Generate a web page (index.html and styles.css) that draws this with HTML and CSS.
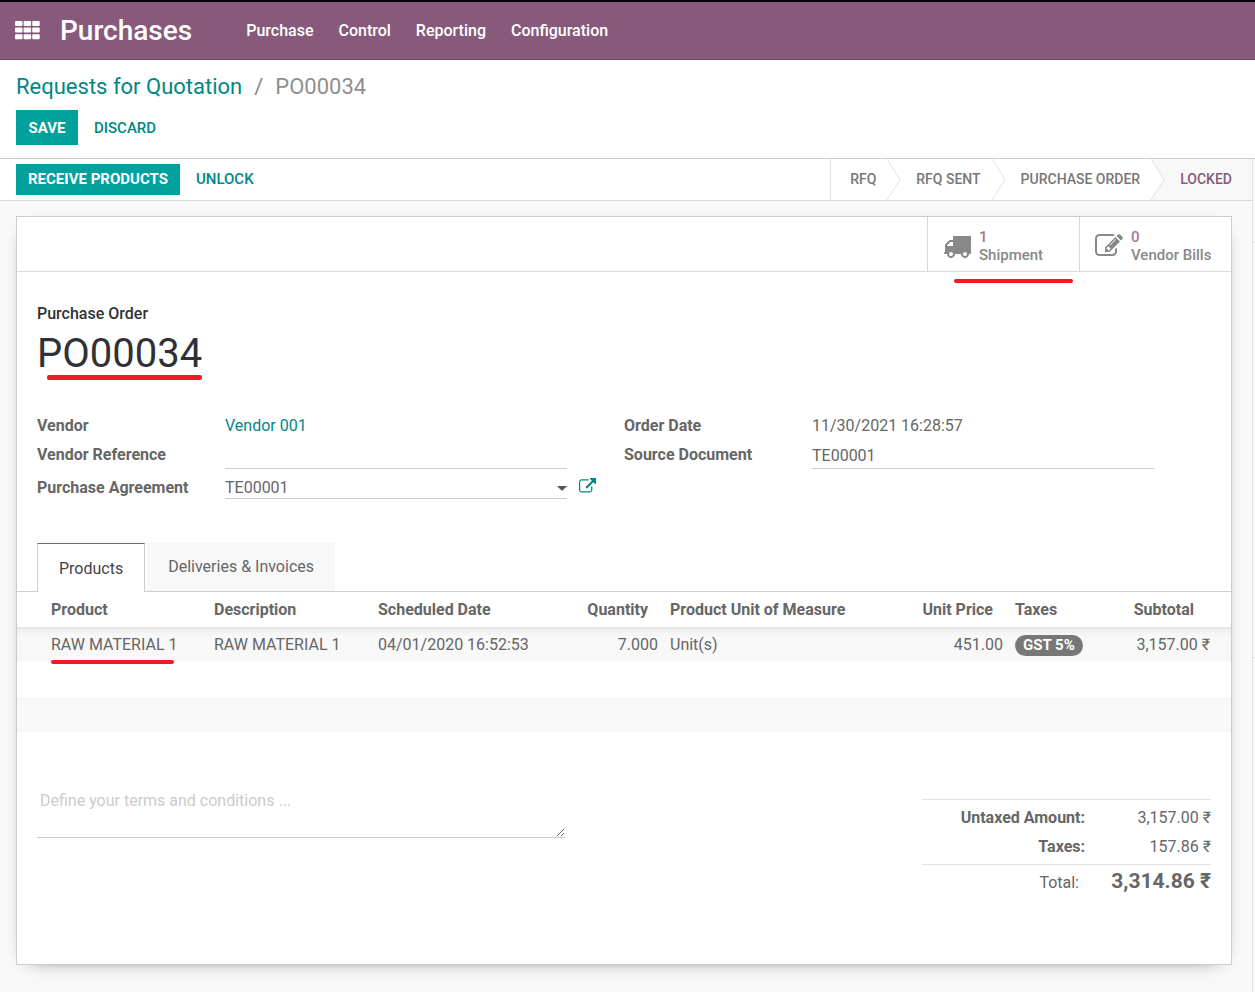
FILE: index.html
```html
<!DOCTYPE html>
<html lang="en">

<head>
    <meta charset="utf-8">
    <title>PO00034 - Purchases</title>
    <link rel="stylesheet" href="styles.css">
</head>

<body>
    <header class="navbar">
        <button class="apps" type="button" aria-label="Applications">
            <svg width="25" height="19" viewBox="0 0 25 19" fill="#fff">
                <rect x="0" y="0" width="7.5" height="5" rx="1" />
                <rect x="8.6" y="0" width="7.5" height="5" rx="1" />
                <rect x="17.2" y="0" width="7.5" height="5" rx="1" />
                <rect x="0" y="6.6" width="7.5" height="5" rx="1" />
                <rect x="8.6" y="6.6" width="7.5" height="5" rx="1" />
                <rect x="17.2" y="6.6" width="7.5" height="5" rx="1" />
                <rect x="0" y="13.2" width="7.5" height="5" rx="1" />
                <rect x="8.6" y="13.2" width="7.5" height="5" rx="1" />
                <rect x="17.2" y="13.2" width="7.5" height="5" rx="1" />
            </svg>
        </button>
        <a class="brand" href="#">Purchases</a>
        <nav class="menu">
            <a href="#">Purchase</a>
            <a href="#">Control</a>
            <a href="#">Reporting</a>
            <a href="#">Configuration</a>
        </nav>
    </header>

    <div class="control-panel">
        <div class="breadcrumb">
            <a href="#">Requests for Quotation</a>
            <span class="slash">/</span>
            <span class="current">PO00034</span>
        </div>
        <div class="buttons">
            <button class="btn primary" type="button">SAVE</button>
            <button class="btn" type="button">DISCARD</button>
        </div>
    </div>

    <div class="content">
        <main class="form-view">
            <div class="statusbar">
                <div class="buttons">
                    <button class="btn primary small" type="button">RECEIVE PRODUCTS</button>
                    <button class="btn small" type="button">UNLOCK</button>
                </div>
                <div class="steps">
                    <span class="step first">RFQ</span>
                    <svg class="arrow" viewBox="0 0 14 41"><path d="M0 0L13 20.5L0 41" /></svg>
                    <span class="step">RFQ SENT</span>
                    <svg class="arrow" viewBox="0 0 14 41"><path d="M0 0L13 20.5L0 41" /></svg>
                    <span class="step">PURCHASE ORDER</span>
                    <svg class="arrow last" viewBox="0 0 14 41"><path d="M0 0L13 20.5L0 41" /></svg>
                    <span class="step active">LOCKED</span>
                </div>
            </div>

            <div class="sheet">
                <div class="button-box">
                    <button class="stat marked" type="button">
                        <svg width="28" height="28" viewBox="0 0 1792 1792"><path d="M640 1408q0-52-38-90t-90-38-90 38-38 90 38 90 90 38 90-38 38-90zm-384-512h384v-256h-158q-13 0-22 9l-195 195q-9 9-9 22v30zm1280 512q0-52-38-90t-90-38-90 38-38 90 38 90 90 38 90-38 38-90zm256-1088v1024q0 15-4 26.5t-13.5 18.5-16.5 11.5-23.5 6-22.5 2-25.5 0-22.5-.5q0 106-75 181t-181 75-181-75-75-181h-384q0 106-75 181t-181 75-181-75-75-181h-64q-3 0-22.5.5t-25.5 0-22.5-2-23.5-6-16.5-11.5-13.5-18.5-4-26.5q0-26 19-45t45-19v-320q0-8-.5-35t0-38 2.5-34.5 6.5-37 14-30.5 22.5-30l198-198q19-19 50.5-32t58.5-13h160v-192q0-26 19-45t45-19h1024q26 0 45 19t19 45z" /></svg>
                        <span class="stat-info"><span class="stat-value">1</span>Shipment</span>
                    </button>
                    <button class="stat" type="button">
                        <svg width="28" height="28" viewBox="0 0 1792 1792"><path d="M888 1184l116-116-152-152-116 116v56h96v96h56zm440-720q-16-16-33 1l-350 350q-17 17-1 33t33-1l350-350q17-17 1-33zm80 594v190q0 119-84.5 203.5t-203.5 84.5h-832q-119 0-203.5-84.5t-84.5-203.5v-832q0-119 84.5-203.5t203.5-84.5h832q63 0 117 25 15 7 18 23 3 17-9 29l-49 49q-14 14-32 8-23-6-45-6h-832q-66 0-113 47t-47 113v832q0 66 47 113t113 47h832q66 0 113-47t47-113v-126q0-13 9-22l64-64q15-15 35-7t20 29zm-96-738l288 288-672 672h-288v-288zm444 132l-92 92-288-288 92-92q28-28 68-28t68 28l152 152q28 28 28 68t-28 68z" /></svg>
                        <span class="stat-info"><span class="stat-value">0</span>Vendor Bills</span>
                    </button>
                </div>

                <div class="title">
                    <div class="title-label">Purchase Order</div>
                    <h1 class="marked">PO00034</h1>
                </div>

                <div class="groups">
                    <div class="group">
                        <div class="field">
                            <span class="label">Vendor</span>
                            <a class="value" href="#">Vendor 001</a>
                        </div>
                        <div class="field tall">
                            <label class="label" for="vendor_ref">Vendor Reference</label>
                            <input class="value" id="vendor_ref" type="text">
                        </div>
                        <div class="field">
                            <label class="label" for="agreement">Purchase Agreement</label>
                            <select class="value" id="agreement">
                                <option>TE00001</option>
                            </select>
                            <a class="external" href="#" aria-label="External link">
                                <svg width="17" height="17" viewBox="0 0 1792 1792"><path d="M1408 928v320q0 119-84.5 203.5t-203.5 84.5h-832q-119 0-203.5-84.5t-84.5-203.5v-832q0-119 84.5-203.5t203.5-84.5h704q14 0 23 9t9 23v64q0 14-9 23t-23 9h-704q-66 0-113 47t-47 113v832q0 66 47 113t113 47h832q66 0 113-47t47-113v-320q0-14 9-23t23-9h64q14 0 23 9t9 23zm384-864v512q0 26-19 45t-45 19-45-19l-176-176-652 652q-10 10-23 10t-23-10l-114-114q-10-10-10-23t10-23l652-652-176-176q-19-19-19-45t19-45 45-19h512q26 0 45 19t19 45z" /></svg>
                            </a>
                        </div>
                    </div>
                    <div class="group">
                        <div class="field">
                            <span class="label">Order Date</span>
                            <span class="value">11/30/2021 16:28:57</span>
                        </div>
                        <div class="field tall">
                            <label class="label" for="source_doc">Source Document</label>
                            <input class="value" id="source_doc" type="text" value="TE00001">
                        </div>
                    </div>
                </div>

                <div class="tabs">
                    <button class="tab active" type="button">Products</button>
                    <button class="tab" type="button">Deliveries &amp; Invoices</button>
                </div>

                <table class="lines">
                    <colgroup>
                        <col class="c-product">
                        <col class="c-text">
                        <col class="c-text">
                        <col class="c-num">
                        <col>
                        <col class="c-num">
                        <col class="c-tax">
                        <col class="c-total">
                    </colgroup>
                    <thead>
                        <tr>
                            <th>Product</th>
                            <th>Description</th>
                            <th>Scheduled Date</th>
                            <th class="num">Quantity</th>
                            <th>Product Unit of Measure</th>
                            <th class="num">Unit Price</th>
                            <th>Taxes</th>
                            <th class="num">Subtotal</th>
                        </tr>
                    </thead>
                    <tbody>
                        <tr class="first-row">
                            <td><span class="marked">RAW MATERIAL 1</span></td>
                            <td>RAW MATERIAL 1</td>
                            <td>04/01/2020 16:52:53</td>
                            <td class="num">7.000</td>
                            <td>Unit(s)</td>
                            <td class="num">451.00</td>
                            <td><span class="tag">GST 5%</span></td>
                            <td class="num">3,157.00 ₹</td>
                        </tr>
                        <tr><td colspan="8"></td></tr>
                        <tr><td colspan="8"></td></tr>
                        <tr><td colspan="8"></td></tr>
                    </tbody>
                </table>

                <div class="bottom">
                    <textarea class="terms" aria-label="Terms and conditions" placeholder="Define your terms and conditions ..."></textarea>
                    <table class="totals">
                        <tr>
                            <th>Untaxed Amount:</th>
                            <td>3,157.00 ₹</td>
                        </tr>
                        <tr>
                            <th>Taxes:</th>
                            <td>157.86 ₹</td>
                        </tr>
                        <tr class="total">
                            <th>Total:</th>
                            <td>3,314.86 ₹</td>
                        </tr>
                    </table>
                </div>
            </div>
        </main>
        <aside class="chatter">
            <div class="chatter-top"></div>
            <div class="chatter-messages"></div>
        </aside>
    </div>
</body>

</html>
```

FILE: styles.css
```css
* {
    box-sizing: border-box;
}

body {
    margin: 0;
    min-height: 100vh;
    display: flex;
    flex-direction: column;
    font-family: Roboto, "Noto Sans", sans-serif;
    font-size: 16px;
    line-height: 24px;
    color: #666;
    background: #fff;
}

a {
    color: #008784;
    text-decoration: none;
}

button,
input,
select,
textarea {
    font: inherit;
    color: inherit;
    background: none;
    border: 0;
    border-radius: 0;
    padding: 0;
    margin: 0;
}

/* top bar */
.navbar {
    display: flex;
    align-items: center;
    height: 60px;
    padding-left: 15px;
    background: #875a7b;
    border-top: 2px solid #000;
    border-bottom: 1px solid #68465f;
}

.apps {
    display: flex;
}

.brand {
    margin-left: 20px;
    font-size: 28px;
    font-weight: 500;
    color: #fff;
}

.menu {
    display: flex;
    gap: 25px;
    margin-left: 54px;
    font-weight: 500;
}

.menu a {
    color: #fff;
}

/* breadcrumb and main buttons */
.control-panel {
    padding: 12px 16px 13px;
    border-bottom: 1px solid #ccc;
}

.breadcrumb {
    display: flex;
    font-size: 22px;
    line-height: 30px;
    margin-bottom: 8px;
}

.slash {
    margin: 0 12px;
    color: #888;
}

.current {
    color: #8f8f8f;
}

.buttons {
    display: flex;
    gap: 4px;
}

.btn {
    min-width: 62px;
    height: 35px;
    padding: 0 12px;
    font-size: 15px;
    font-weight: 500;
    color: #008784;
}

.btn.primary {
    background: #00a09d;
    color: #fff;
    font-weight: 700;
}

.btn.small {
    height: 31px;
    padding-bottom: 2px;
}

.content {
    flex: 1;
    display: flex;
    background: #f9f9f9;
}

.form-view {
    flex: 1;
}

.statusbar {
    display: flex;
    align-items: center;
    justify-content: space-between;
    height: 42px;
    padding-left: 16px;
    background: #fff;
    border-bottom: 1px solid #d9d9d9;
}

.steps {
    display: flex;
    height: 41px;
    border-left: 1px solid #dee2e6;
    font-size: 14px;
    font-weight: 500;
    line-height: 41px;
    color: #777;
}

.step {
    padding: 0 11px 0 15px;
}

.step.first {
    padding-left: 19px;
}

.step.active {
    padding-right: 20px;
    background: #f8f8f8;
    color: #875a7b;
}

.arrow {
    width: 14px;
    height: 41px;
    fill: #fff;
    stroke: #dee2e6;
}

.arrow.last {
    background: #f8f8f8;
}

/* sheet */
.sheet {
    margin: 15px 20px 27px 16px;
    min-height: 749px;
    background: #fff;
    border: 1px solid #ccc;
    box-shadow: 0 5px 20px -15px #000;
}

.button-box {
    display: flex;
    justify-content: flex-end;
    height: 55px;
    border-bottom: 1px solid #d9d9d9;
}

.stat {
    display: flex;
    align-items: center;
    gap: 8px;
    width: 152px;
    padding: 3px 0 0 15px;
    border-left: 1px solid #d9d9d9;
    font-size: 15px;
    font-weight: 500;
    line-height: 18px;
    text-align: left;
    color: #888;
}

.stat svg {
    fill: #888;
}

.stat-value {
    display: block;
    color: #a2769a;
}

/* red pen lines */
.marked {
    position: relative;
}

.marked::after {
    content: "";
    position: absolute;
    left: 0;
    right: 3px;
    bottom: -10px;
    height: 4px;
    border-radius: 2px;
    background: #ed1c24;
}

.stat.marked::after {
    left: 26px;
    right: 6px;
    bottom: -12px;
}

h1.marked::after {
    left: 10px;
    right: 0;
    bottom: -2px;
    height: 5px;
}

.title {
    padding: 30px 20px 0;
    color: #2f3136;
}

.title-label {
    font-weight: 500;
}

h1 {
    width: fit-content;
    margin: 4px 0 0;
    font-size: 40px;
    font-weight: 400;
    line-height: 48px;
}

.groups {
    display: flex;
    padding: 36px 20px 0;
}

.group {
    flex: 1;
}

.field {
    display: flex;
    min-height: 29px;
}

.field.tall {
    min-height: 33px;
}

.label {
    width: 188px;
    font-weight: 700;
}

.value {
    width: calc(100% - 245px);
}

input.value,
select.value {
    height: 26px;
    border-bottom: 1px solid #ccc;
}

select.value {
    appearance: none;
    height: 23px;
    background: url('data:image/svg+xml,<svg xmlns="http://www.w3.org/2000/svg" width="10" height="5"><path d="M0 0h10L5 5z" fill="%23555"/></svg>') right 0 top 10px no-repeat;
}

.external {
    display: flex;
    margin: 2px 0 0 12px;
}

.external svg {
    fill: #008784;
}

/* tabs and order lines */
.tabs {
    display: flex;
    gap: 2px;
    margin-top: 38px;
    padding-left: 20px;
    height: 49px;
    border-bottom: 1px solid #d0d0d0;
}

.tab {
    height: 48px;
    padding: 0 21px;
    background: #f8f8f8;
}

.tab.active {
    height: 49px;
    padding-top: 1px;
    background: #fff;
    border: 1px solid #ccc;
    border-top-color: #875a7b;
    border-bottom: 0;
    color: #444;
}

.lines {
    width: 100%;
    table-layout: fixed;
    border-collapse: collapse;
}

.c-product {
    width: 191px;
}

.c-text {
    width: 164px;
}

.c-num {
    width: 128px;
}

.c-tax {
    width: 100px;
}

.c-total {
    width: 122px;
}

.lines th,
.lines td {
    height: 35px;
    padding: 0 6px;
    text-align: left;
    white-space: nowrap;
}

.lines th {
    font-weight: 700;
}

.lines .num {
    text-align: right;
}

.lines th.num {
    padding-right: 16px;
}

.lines th:first-child,
.lines td:first-child {
    padding-left: 34px;
}

.lines td.num:last-child {
    padding-right: 21px;
}

.lines th.num:last-child {
    padding-right: 37px;
}

.lines tbody tr:nth-child(odd) {
    background: #f8f8f8;
}

.lines .first-row {
    box-shadow: inset 0 7px 9px -7px #ccc;
}

.tag {
    display: inline-block;
    padding: 0 8px;
    border-radius: 11px;
    background: #777;
    color: #fff;
    font-size: 15px;
    font-weight: 700;
    line-height: 21px;
}

.bottom {
    display: flex;
    justify-content: space-between;
    align-items: flex-start;
    padding: 20px 20px 0;
}

.terms {
    width: 45%;
    height: 51px;
    padding: 2px 3px;
    border-bottom: 1px solid #ccc;
}

.terms::placeholder {
    color: #ccc;
}

.totals {
    width: 289px;
    margin-top: 12px;
    border-collapse: collapse;
    border-top: 1px solid #dee2e6;
    text-align: right;
    line-height: 29px;
}

.totals th,
.totals td {
    padding: 0;
    font-weight: 400;
}

.totals th {
    width: 163px;
    font-weight: 700;
    text-align: right;
}

.totals tr:first-child td,
.totals tr:first-child th {
    padding-top: 3px;
}

.totals tr:nth-child(2) td,
.totals tr:nth-child(2) th {
    padding-bottom: 3px;
}

.totals .total {
    border-top: 1px solid #dee2e6;
}

.totals .total th {
    padding: 3px 6px 0 0;
    font-weight: 400;
}

.totals .total td {
    font-size: 21px;
    font-weight: 700;
}

/* edge of the messages column */
.chatter {
    width: 3px;
    border-left: 1px solid #dee2e6;
}

.chatter-top {
    height: 84px;
    border-bottom: 1px solid #dee2e6;
}

.chatter-messages {
    height: 415px;
    border-bottom: 1px solid #dee2e6;
}
```
